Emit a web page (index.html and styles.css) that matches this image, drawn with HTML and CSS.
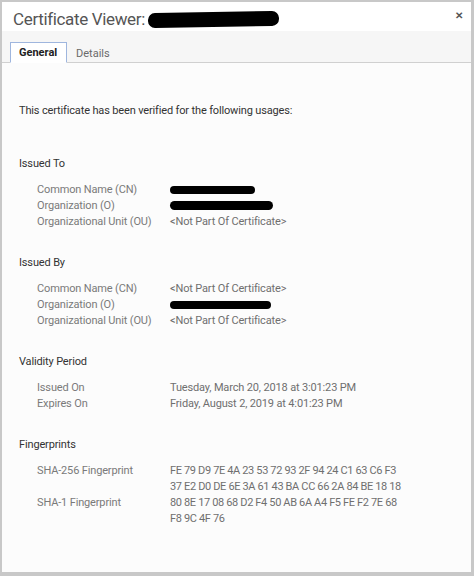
FILE: index.html
```html
<!DOCTYPE html>
<html>
<head>
<meta charset="utf-8">
<link rel="stylesheet" href="styles.css">
</head>
<body>
<div class="window">
  <div class="titlebar">
    <span class="title">Certificate Viewer:</span>
    <span class="redact redact-title"></span>
    <span class="close">&#x2715;</span>
  </div>
  <div class="tabs">
    <div class="tab active">General</div>
    <div class="tab">Details</div>
  </div>
  <div class="content">
    <p class="intro">This certificate has been verified for the following usages:</p>

    <section class="section first">
      <h2 class="heading">Issued To</h2>
      <div class="grid">
        <div class="label">Common Name (CN)</div><div class="value"><span class="redact r-cn"></span></div>
        <div class="label">Organization (O)</div><div class="value"><span class="redact r-org"></span></div>
        <div class="label">Organizational Unit (OU)</div><div class="value">&lt;Not Part Of Certificate&gt;</div>
      </div>
    </section>

    <section class="section">
      <h2 class="heading">Issued By</h2>
      <div class="grid">
        <div class="label">Common Name (CN)</div><div class="value">&lt;Not Part Of Certificate&gt;</div>
        <div class="label">Organization (O)</div><div class="value"><span class="redact r-org2"></span></div>
        <div class="label">Organizational Unit (OU)</div><div class="value">&lt;Not Part Of Certificate&gt;</div>
      </div>
    </section>

    <section class="section">
      <h2 class="heading">Validity Period</h2>
      <div class="grid">
        <div class="label">Issued On</div><div class="value">Tuesday, March 20, 2018 at 3:01:23 PM</div>
        <div class="label">Expires On</div><div class="value">Friday, August 2, 2019 at 4:01:23 PM</div>
      </div>
    </section>

    <section class="section">
      <h2 class="heading">Fingerprints</h2>
      <div class="grid">
        <div class="label">SHA-256 Fingerprint</div>
        <div class="value hex"><span class="hexline">FE 79 D9 7E 4A 23 53 72 93 2F 94 24 C1 63 C6 F3</span><span class="hexline">37 E2 D0 DE 6E 3A 61 43 BA CC 66 2A 84 BE 18 18</span></div>
        <div class="label">SHA-1 Fingerprint</div>
        <div class="value hex"><span class="hexline">80 8E 17 08 68 D2 F4 50 AB 6A A4 F5 FE F2 7E 68</span><span class="hexline">F8 9C 4F 76</span></div>
      </div>
    </section>
  </div>
</div>
</body>
</html>
```
FILE: styles.css
```css
html, body {
  margin: 0;
  padding: 0;
  background: #c8c8c8;
}
body {
  width: 474px;
  height: 576px;
  overflow: hidden;
  font-family: Roboto, "Liberation Sans", sans-serif;
}
.window {
  margin: 2px 3px 0 2px;
  height: 570px;
  background: #fcfcfc;
  display: flex;
  flex-direction: column;
}
.titlebar {
  height: 29px;
  background: #ffffff;
  display: flex;
  align-items: center;
  padding-left: 11px;
  position: relative;
}
.title {
  font-size: 17px;
  letter-spacing: -0.35px;
  color: #555555;
  padding-top: 4px;
}
.redact {
  display: inline-block;
  background: #000;
  border-radius: 8px;
}
.redact-title {
  width: 131px;
  height: 15px;
  margin-left: 3px;
  margin-top: 6px;
  border-radius: 7px;
  transform: rotate(-1deg);
}
.close {
  position: absolute;
  right: 8px;
  top: 8px;
  font-size: 10px;
  color: #555;
  font-weight: bold;
}
.tabs {
  height: 31px;
  background: #f6f6f6;
  border-bottom: 1px solid #d0d0d0;
  display: flex;
  align-items: flex-end;
  padding-left: 8px;
}
.tab {
  height: 19px;
  line-height: 19px;
  padding: 0 9px;
  font-size: 11px;
  color: #6a6a6a;
  margin-bottom: -1px;
}
.tab.active {
  background: #fff;
  border: 1px solid #9fb6de;
  border-bottom-color: #fff;
  font-weight: bold;
  color: #222;
  padding: 0 8px 0 8px;
  width: 39px;
}
.content {
  padding: 0 17px;
  font-size: 11px;
  letter-spacing: -0.15px;
}
.intro {
  margin: 41px 0 0 0;
  color: #333;
}
.section {
  margin-top: 26px;
}
.section.first {
  margin-top: 39.5px;
}
.heading {
  margin: 0;
  font-size: 11px;
  font-weight: normal;
  color: #333;
}
.grid {
  margin-top: 12px;
  display: grid;
  grid-template-columns: 133px 1fr;
  padding-left: 18px;
  line-height: 16px;
}
.label {
  color: #7a7a7a;
}
.value {
  color: #6f6f6f;
}
.hex {
  letter-spacing: -0.35px;
}
.hexline {
  display: block;
  white-space: nowrap;
}
.r-cn { width: 85px; height: 8px; vertical-align: middle; }
.r-org { width: 103px; height: 9px; vertical-align: middle; }
.r-org2 { width: 101px; height: 8px; vertical-align: middle; }
```
